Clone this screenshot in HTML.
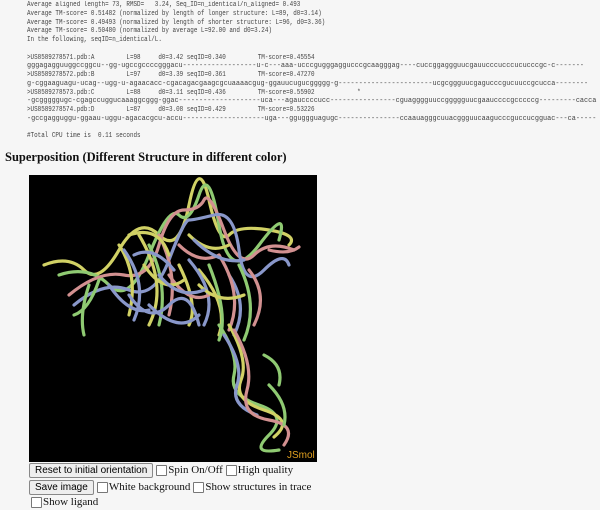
<!DOCTYPE html>
<html><head><style>
body{margin:0;background:#f6f6f6;width:600px;height:510px;overflow:hidden;position:relative}
pre{position:absolute;left:27px;margin:0;font-family:"Liberation Mono",monospace;font-size:7px;line-height:8.75px;color:#444;white-space:pre;transform-origin:0 0}
.a{transform:scaleX(0.845)}
.s{transform:scaleX(0.975)}
h3{position:absolute;left:5px;top:150px;margin:0;font:bold 12.5px "Liberation Serif",serif;color:#111}
#cv{position:absolute;left:29px;top:175px;width:288px;height:287px;background:#000}
.ui{position:absolute;font:11px "Liberation Serif",serif;color:#111;white-space:nowrap}
button{font:10px "Liberation Sans",sans-serif;padding:1px 5px;height:15px;border:1px solid #888;background:#eee;border-radius:2px;vertical-align:middle}
.cb{display:inline-block;width:9px;height:9px;border:1px solid #777;background:#fff;border-radius:1px;vertical-align:middle;margin:0 1px 0 3px}
</style></head><body>
<div style="position:absolute;left:0;top:0;width:600px;height:150px;overflow:hidden">
<pre class="a" style="top:1px">Average aligned length= 73, RMSD=   3.24, Seq_ID=n_identical/n_aligned= 0.493
Average TM-score= 0.51482 (normalized by length of longer structure: L=89, d0=3.14)
Average TM-score= 0.49493 (normalized by length of shorter structure: L=96, d0=3.36)
Average TM-score= 0.50480 (normalized by average L=92.00 and d0=3.24)
In the following, seqID=n_identical/L.

>US8589278571.pdb:A         L=98     d0=3.42 seqID=0.340         TM-score=0.45554

>US8589278572.pdb:B         L=97     d0=3.39 seqID=0.361         TM-score=0.47270

>US8589278573.pdb:C         L=88     d0=3.11 seqID=0.436         TM-score=0.55902            *

>US8589278574.pdb:D         L=87     d0=3.08 seqID=0.429         TM-score=0.53226


#Total CPU time is  0.11 seconds</pre>
<pre class="s" style="top:62px">gggagagguuggccggcu--gg-ugccgccccgggacu------------------u-c---aaa-ucccgugggaggucccgcaagggag----cuccggaggguucgauucccucccucucccgc-c-------

g-cggaaguagu-ucag--ugg-u-agaacacc-cgacagacgaagcgcuaaaacgug-ggauucugucggggg-g-----------------------ucgcggguucgagucccgucuuccgcucca--------

-gcgggggugc-cgagccuggucaaaggcggg-ggac--------------------uca---agauccccucc----------------cguagggguuccggggguucgaauccccgcccccg---------cacca

-gccgagguggu-ggaau-uggu-agacacgcu-accu--------------------uga---gguggguagugc---------------ccaauagggcuuacggguucaagucccguccucgguac---ca-----</pre>
</div>
<h3>Superposition (Different Structure in different color)</h3>
<div id="cv">
<svg width="288" height="287" viewBox="0 0 288 287" fill="none" stroke-linecap="round">
<g stroke-width="3.2" opacity="0.9">
<path d="M15 90 Q40 80 55 95 T90 75 T130 60 T160 30 T180 25 T200 60 T240 55 T260 70" stroke="#e8e870"/>
<path d="M30 100 Q60 90 80 110 T120 80 T150 40 T170 20 T190 50 T230 70 T250 65" stroke="#9fe07f"/>
<path d="M40 120 Q70 95 95 100 T130 70 T155 35 T175 25 T195 55 T225 80 T265 75" stroke="#e9a0a0"/>
<path d="M45 130 Q75 105 100 115 T140 85 T160 45 T185 40 T210 75 T235 95 T260 90" stroke="#98a8e0"/>
<path d="M90 70 Q110 100 100 140 M110 60 Q140 110 120 150 M150 90 Q170 130 160 150 M170 95 Q200 130 190 160" stroke="#e8e870"/>
<path d="M95 75 Q120 110 105 145 M160 85 Q190 120 175 150 M200 100 Q220 130 205 160" stroke="#98a8e0"/>
<path d="M120 70 Q140 110 130 150 M180 90 Q200 140 190 165 M210 90 Q230 130 215 165" stroke="#9fe07f"/>
<path d="M130 60 Q150 100 140 140 M190 80 Q215 120 200 155 M220 95 Q240 120 225 150" stroke="#e9a0a0"/>
<path d="M190 150 Q210 180 205 200 T230 230 T240 260 T250 275" stroke="#9fe07f"/>
<path d="M200 150 Q220 185 212 205 T235 235 T245 262" stroke="#e8e870"/>
<path d="M195 160 Q215 190 208 210 T228 240" stroke="#98a8e0"/>
<path d="M205 155 Q225 190 218 215 T240 245 T255 270" stroke="#e9a0a0"/>
<path d="M60 110 Q50 140 55 160 M70 105 Q60 135 45 140 M235 180 Q255 190 250 210 M240 210 Q260 230 255 250" stroke="#9fe07f"/>
<path d="M100 120 Q120 150 140 130 T170 150 M120 130 Q150 160 170 140 M80 110 Q100 140 120 135" stroke="#98a8e0"/>
<path d="M140 100 Q160 130 180 120 M150 70 Q170 90 190 80 M240 75 Q260 80 270 72" stroke="#e9a0a0"/>
<path d="M100 60 Q130 50 140 80 M160 60 Q180 80 200 70 M115 90 Q135 120 155 105 M170 110 Q190 130 215 120" stroke="#e8e870"/>
<path d="M105 80 Q125 70 145 95 M165 65 Q190 90 215 85 M130 100 Q150 125 175 115" stroke="#98a8e0"/>
</g>
<text x="258" y="283" fill="#e0a020" font-family="Liberation Sans,sans-serif" font-size="10">JSmol</text>
</svg>
</div>
<div class="ui" style="left:29px;top:463px"><button>Reset to initial orientation</button><span class="cb"></span>Spin On/Off<span class="cb"></span>High quality</div>
<div class="ui" style="left:29px;top:480px"><button>Save image</button><span class="cb"></span>White background<span class="cb"></span>Show structures in trace</div>
<div class="ui" style="left:28px;top:496px"><span class="cb" style="margin-left:3px"></span>Show ligand</div>
</body></html>
